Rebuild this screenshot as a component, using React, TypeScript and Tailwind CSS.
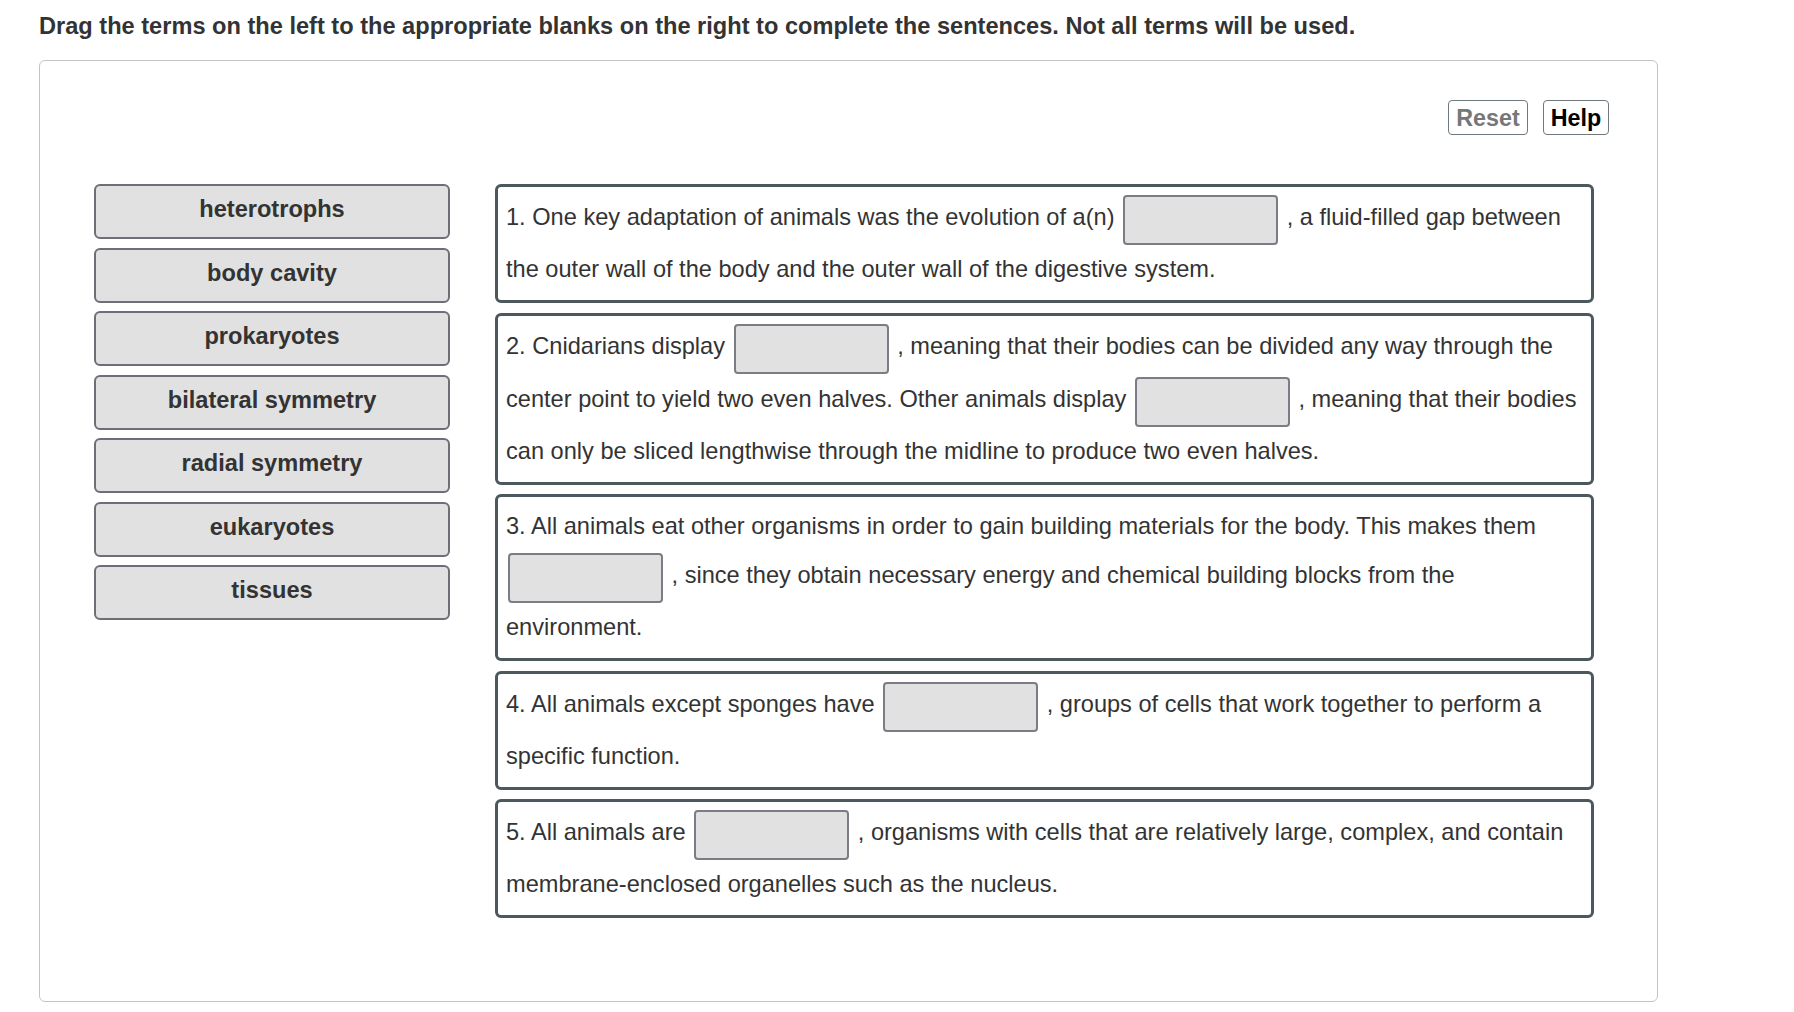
import React from 'react';

const terms = [
    'heterotrophs',
    'body cavity',
    'prokaryotes',
    'bilateral symmetry',
    'radial symmetry',
    'eukaryotes',
    'tissues',
];

const Blank = () => (
    <span className="inline-block align-middle mt-[3px] mx-[2px] w-[155px] h-[50px] rounded-[4px] border-2 border-[#7c7c84] bg-[#e1e1e1]" />
);

const Sentence = ({ children }: { children: React.ReactNode }) => (
    <div className="rounded-[6px] border-[3px] border-[#4c585c] px-[8px] pt-[5px] pb-[7px] text-[23.6px] leading-[48px] text-[#333]">
        {children}
    </div>
);

const App = () => {
    return (
        <div className="min-h-screen bg-white font-['Liberation_Sans',Arial,sans-serif] text-[#333]">
            <div className="px-[39px] pt-[12px]">
                <h1 className="text-[23.6px] leading-[28px] font-bold text-[#333]">
                    Drag the terms on the left to the appropriate blanks on the right to complete the sentences. Not all terms will be used.
                </h1>
                <div className="mt-[20px] w-[1619px] h-[942px] rounded-[6px] border border-[#c4c4c4]">
                    <div className="flex justify-end gap-[15px] pt-[39px] pr-[48px]">
                        <button className="h-[35px] w-[80px] rounded-[4px] border border-[#6f7a7e] text-[23.3px] font-bold text-[#777]">
                            Reset
                        </button>
                        <button className="h-[35px] w-[66px] rounded-[4px] border border-[#6f7a7e] text-[23.3px] font-bold text-black">
                            Help
                        </button>
                    </div>
                    <div className="flex gap-[45px] pl-[54px] mt-[49px]">
                        <div className="w-[356px] flex flex-col gap-[8.5px]">
                            {terms.map(t => (
                                <div
                                    key={t}
                                    className="h-[55px] rounded-[6px] border-2 border-[#6e6e76] bg-[#e1e1e1] pt-[10px] text-center text-[23.6px] leading-[26px] font-bold text-[#333]"
                                >
                                    {t}
                                </div>
                            ))}
                        </div>
                        <div className="w-[1099px] flex flex-col gap-[9.5px]">
                            <Sentence>
                                1. One key adaptation of animals was the evolution of a(n) <Blank /> , a fluid-filled gap between the outer wall of the body and the outer wall of the digestive system.
                            </Sentence>
                            <Sentence>
                                2. Cnidarians display <Blank /> , meaning that their bodies can be divided any way through the center point to yield two even halves. Other animals display <Blank /> , meaning that their bodies can only be sliced lengthwise through the midline to produce two even halves.
                            </Sentence>
                            <Sentence>
                                3. All animals eat other organisms in order to gain building materials for the body. This makes them <Blank /> , since they obtain necessary energy and chemical building blocks from the environment.
                            </Sentence>
                            <Sentence>
                                4. All animals except sponges have <Blank /> , groups of cells that work together to perform a specific function.
                            </Sentence>
                            <Sentence>
                                5. All animals are <Blank /> , organisms with cells that are relatively large, complex, and contain membrane-enclosed organelles such as the nucleus.
                            </Sentence>
                        </div>
                    </div>
                </div>
            </div>
        </div>
    );
};

export default App;
